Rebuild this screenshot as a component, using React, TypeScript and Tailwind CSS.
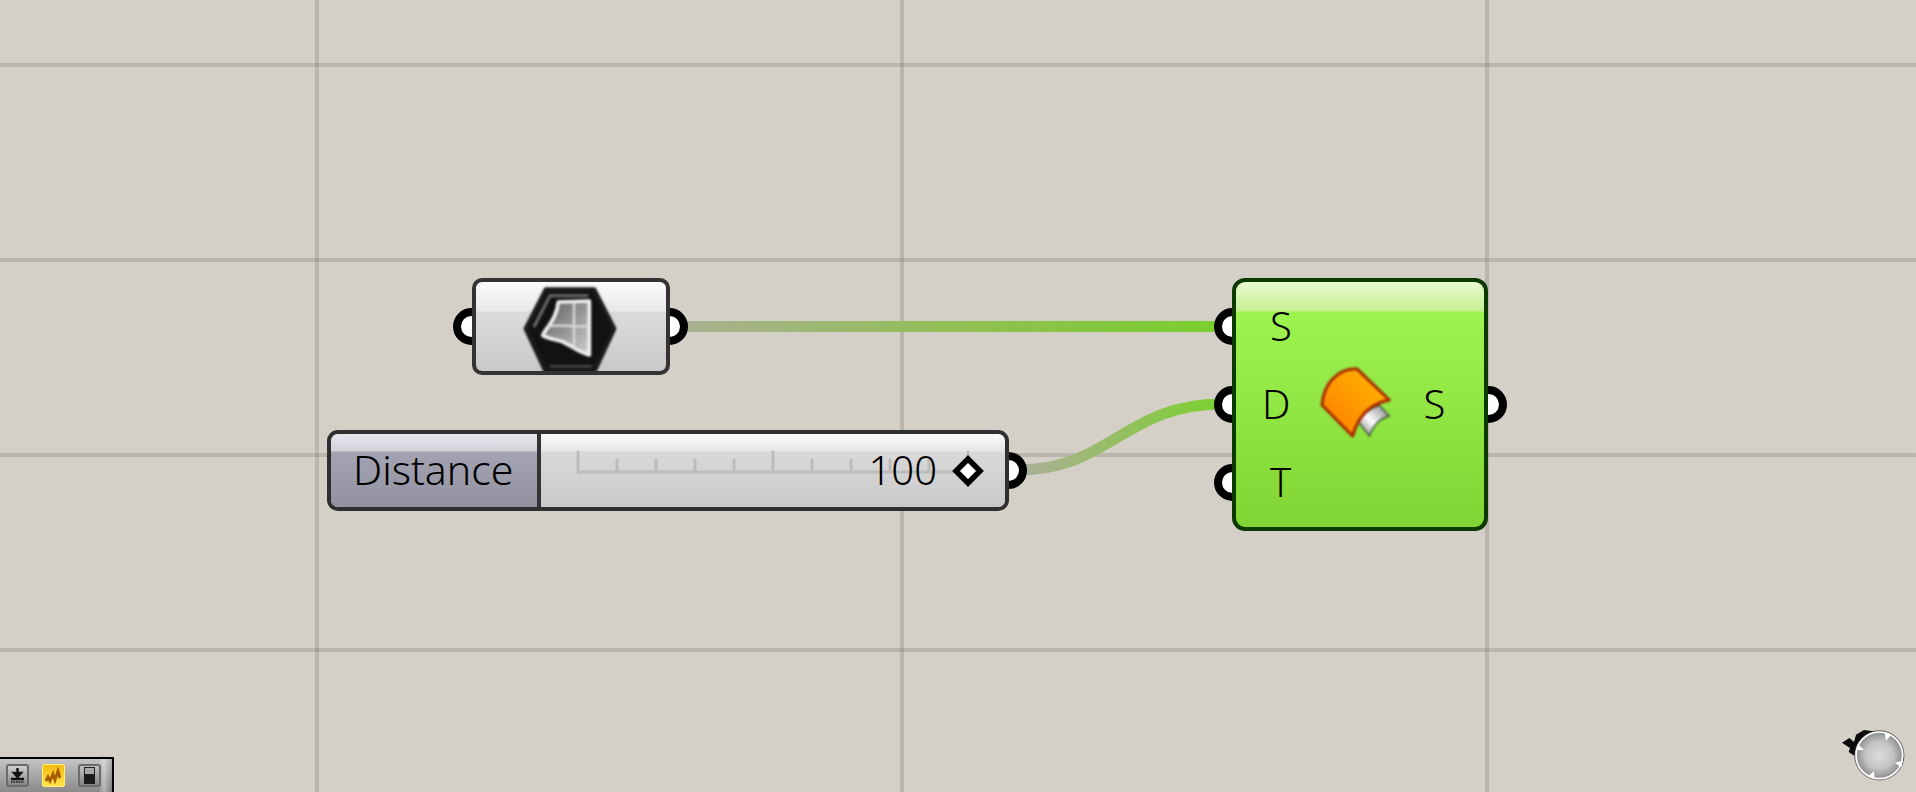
const TICKS = Array.from({ length: 11 }, (_, i) => i);

function Grip({ className }: { className: string }) {
  return <div className={`absolute h-[37px] w-[37px] rounded-full border-[8px] border-black bg-white ${className}`} />;
}

function HexIcon() {
  return (
    <svg width="110" height="100" viewBox="0 0 330 300" className="blur-[1px]">
      <defs>
        <linearGradient id="cell" x1="0" y1="0" x2="1" y2="1">
          <stop offset="0" stopColor="#5c5c5c" />
          <stop offset="0.5" stopColor="#949494" />
          <stop offset="1" stopColor="#cfcfcf" />
        </linearGradient>
      </defs>
      <path d="M48 155 L108 38 H252 L312 155 L252 285 H108 Z" fill="#121212" stroke="#1a1a1a" strokeWidth="14" strokeLinejoin="round" />
      <path d="M72 150 L120 56 H235" fill="none" stroke="#6a6a6a" strokeWidth="9" />
      <path d="M120 268 H245" stroke="#505050" strokeWidth="7" />
      <path d="M145 75 L238 72 V234 C205 225 180 205 160 195 C140 188 115 185 98 175 C110 150 140 125 145 75 Z" fill="url(#cell)" stroke="#f2f2f2" strokeWidth="11" strokeLinejoin="round" />
      <path d="M192 78 V218 M112 150 C140 140 175 150 238 148" fill="none" stroke="#dcdcdc" strokeWidth="7" />
    </svg>
  );
}

function OrangeIcon() {
  return (
    <svg width="110" height="100" viewBox="0 0 330 300" className="blur-[1px]">
      <defs>
        <linearGradient id="orange" x1="0" y1="1" x2="1" y2="0">
          <stop offset="0" stopColor="#ff7a00" />
          <stop offset="1" stopColor="#ffbb00" />
        </linearGradient>
        <linearGradient id="sheet" x1="0" y1="1" x2="1" y2="0">
          <stop offset="0" stopColor="#6f6f6f" />
          <stop offset="0.45" stopColor="#ffffff" />
          <stop offset="1" stopColor="#777777" />
        </linearGradient>
      </defs>
      <path d="M205 215 C215 195 240 175 268 166 L298 198 C270 205 250 225 238 258 Z" fill="url(#sheet)" stroke="#3a4a38" strokeWidth="4" strokeLinejoin="round" />
      <path d="M200 56 L298 150 C245 160 205 195 188 258 L96 165 C100 105 140 55 200 56 Z" fill="url(#orange)" stroke="#a92a00" strokeWidth="9" strokeLinejoin="round" />
    </svg>
  );
}

function Compass() {
  return (
    <svg width="90" height="70" viewBox="0 0 270 210" className="blur-[0.4px]">
      <defs>
        <radialGradient id="dial">
          <stop offset="0" stopColor="#dcdcdc" />
          <stop offset="0.55" stopColor="#c4c4c4" />
          <stop offset="1" stopColor="#858585" />
        </radialGradient>
      </defs>
      <path d="M48 62 L70 48 L84 60 L90 38 L114 24 L142 28 L104 70 L86 102 L68 90 L72 78 Z" fill="#0c0c0c" />
      <circle cx="160" cy="100" r="74" fill="url(#dial)" stroke="#333" strokeWidth="2" />
      <circle cx="160" cy="100" r="70" fill="none" stroke="#fff" strokeWidth="5" />
      <path d="M176 32 L196 38 L180 56 Z M230 116 L226 136 L206 122 Z M146 170 L126 162 L144 148 Z M90 84 L96 66 L114 84 Z" fill="#fff" />
    </svg>
  );
}

function Toolbar() {
  return (
    <div className="absolute bottom-0 left-0 flex h-[35px] w-[114px] items-center gap-[13px] border-t-2 border-r-2 border-black bg-[linear-gradient(to_right,transparent_0%,transparent_88%,rgba(255,255,255,0.35)_93%,rgba(0,0,0,0.12)_100%),linear-gradient(to_bottom,#c4c4c4,#8a8a8a)] pl-[6px]">
      <div className="flex h-[23px] w-[23px] items-center justify-center rounded-[3px] border-2 border-[#6a6a6a] bg-[linear-gradient(to_bottom,#cfcfcf,#858585)] blur-[0.4px]">
        <svg width="17" height="17" viewBox="0 0 17 17">
          <path d="M8.5 1 V8 M5 6 L8.5 10 L12 6 Z M2 12 H15" stroke="#111" strokeWidth="2.4" fill="#111" />
          <path d="M2 15 H15" stroke="#333" strokeWidth="2" strokeDasharray="1.5 1" />
        </svg>
      </div>
      <div className="flex h-[23px] w-[23px] items-center justify-center rounded-[2px] border border-[#fff07a] bg-[linear-gradient(to_bottom,#f2bc10,#ffe24a)] blur-[0.4px]">
        <svg width="19" height="17" viewBox="0 0 19 17">
          <path d="M2 14 L4 10 L6 14 L9 7 L11 13 L14 4 L16 11" fill="none" stroke="#a85c00" strokeWidth="2.8" />
        </svg>
      </div>
      <div className="flex h-[23px] w-[23px] flex-col items-center justify-center rounded-[3px] border-2 border-[#6a6a6a] bg-[linear-gradient(to_bottom,#c2c2c2,#858585)] blur-[0.4px]">
        <div className="h-[8px] w-[11px] border border-[#222] bg-[#a8a8a8]" />
        <div className="h-[9px] w-[11px] bg-[#1c1c1c]" />
      </div>
    </div>
  );
}

export default function App() {
  return (
    <div className="relative h-[792px] w-[1916px] overflow-hidden bg-[#d4d0c8] bg-[linear-gradient(to_right,rgba(110,108,95,0.26)_4px,transparent_4px),linear-gradient(to_bottom,rgba(110,108,95,0.26)_4px,transparent_4px)] bg-[size:585px_195px] bg-[position:315px_63px] font-['Noto_Sans',sans-serif] text-black">
      {/* wires */}
      <svg className="absolute inset-0" width="1916" height="792" fill="none">
        <defs>
          <linearGradient id="w1" gradientUnits="userSpaceOnUse" x1="688" y1="0" x2="1214" y2="0">
            <stop offset="0" stopColor="#a8b190" />
            <stop offset="0.55" stopColor="#8fc050" />
            <stop offset="1" stopColor="#7bcf30" />
          </linearGradient>
          <linearGradient id="w2" gradientUnits="userSpaceOnUse" x1="1025" y1="0" x2="1214" y2="0">
            <stop offset="0" stopColor="#aab096" />
            <stop offset="0.5" stopColor="#94bf60" />
            <stop offset="1" stopColor="#7dd032" />
          </linearGradient>
        </defs>
        <path d="M680 326.5 H1220" stroke="url(#w1)" strokeWidth="11" />
        <path d="M1018 470 C1110 470 1125 404 1222 404" stroke="url(#w2)" strokeWidth="11" />
      </svg>

      {/* surface param */}
      <Grip className="left-[453px] top-[308px]" />
      <Grip className="left-[651px] top-[308px]" />
      <div className="absolute left-[472px] top-[278px] flex h-[97px] w-[198px] items-center justify-center overflow-hidden rounded-[10px] border-[4px] border-[#333] bg-[linear-gradient(to_bottom,#fafafa_0,#e9e9e9_29px,#dcdcdc_30px,#c9c9c9_100%)]">
        <div className="mr-[12px]">
          <HexIcon />
        </div>
      </div>

      {/* number slider */}
      <Grip className="left-[990px] top-[452px]" />
      <div className="absolute left-[327px] top-[430px] flex h-[81px] w-[682px] overflow-hidden rounded-[11px] border-[4px] border-[#2f2f2f]">
        <div className="flex w-[210px] items-center border-r-[4px] border-[#333] bg-[linear-gradient(to_bottom,#e6e6ec_0,#d2d2da_17px,#a3a3b3_18px,#92929f_100%)] pb-[2px] pl-[22px] text-[41px] font-light leading-none">
          Distance
        </div>
        <div className="relative flex flex-1 items-center justify-end bg-[linear-gradient(to_bottom,#fbfbfb_0,#e6e6e6_17px,#d9d9d9_18px,#c9c9c9_100%)] pr-[21px]">
          <svg className="absolute left-[35px] top-[16px]" width="400" height="30" fill="none" stroke="#bcbcbc" strokeWidth="3">
            <path d="M2 22 H398" />
            {TICKS.map((i) => (
              <path key={i} d={`M${2 + i * 39} ${i % 5 === 0 ? 2 : 10} V22`} strokeLinecap="round" />
            ))}
          </svg>
          <span className="relative mr-[15px] pb-[2px] text-[40px] font-light leading-none">100</span>
          <svg className="relative" width="32" height="32" viewBox="0 0 32 32">
            <path d="M16 4 L28 16 L16 28 L4 16 Z" fill="#fff" stroke="#000" strokeWidth="5.5" />
          </svg>
        </div>
      </div>

      {/* green component */}
      <Grip className="left-[1214px] top-[308px]" />
      <Grip className="left-[1214px] top-[386px]" />
      <Grip className="left-[1214px] top-[464px]" />
      <Grip className="left-[1470px] top-[386px]" />
      <div className="absolute left-[1232px] top-[278px] flex h-[253px] w-[256px] items-center overflow-hidden rounded-[13px] border-[4px] border-[#0b3a00] bg-[linear-gradient(to_bottom,#e8fbd0_0,#c6ef90_29px,#9ef44f_30px,#80d534_100%)] pb-[2px] text-[40px] font-light leading-none">
        <div className="flex w-[54px] shrink-0 flex-col gap-[38px] text-center">
          <span className="pl-[34px]">S</span>
          <span className="pl-[26px]">D</span>
          <span className="pl-[34px]">T</span>
        </div>
        <div className="w-[110px] shrink-0 pb-[7px]">
          <OrangeIcon />
        </div>
        <span className="w-[84px] shrink-0 pr-[15px] text-center">S</span>
      </div>

      <Toolbar />
      <div className="absolute bottom-0 right-0">
        <Compass />
      </div>
    </div>
  );
}
